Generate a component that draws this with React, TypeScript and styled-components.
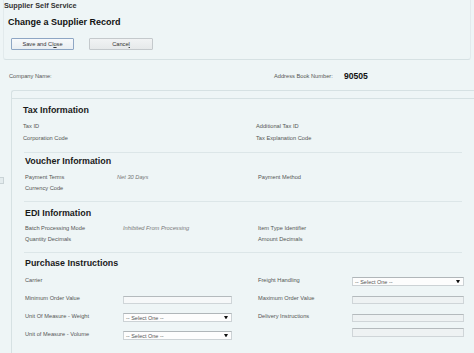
import React from "react";
import styled, { createGlobalStyle } from "styled-components";

const GlobalStyle = createGlobalStyle`
  html, body { margin: 0; padding: 0; background: #eef5f6; overflow: hidden; }
  body { font-family: "Liberation Sans", Arial, sans-serif; color: #444; }
  * { box-sizing: border-box; }
`;

const Page = styled.div`
  position: relative;
  width: 474px;
  height: 353px;
  overflow: hidden;
  background: #eef5f6;
`;

const Header = styled.header`
  margin: 0 3px;
  height: 60px;
  border-bottom: 1px solid #d6e1e3;
  border-left: 1px solid #e2eaec;
  border-right: 1px solid #e2eaec;
  border-radius: 0 0 3px 3px;
  display: flex;
  flex-direction: column;
`;

const AppTitle = styled.div`
  font-size: 7.3px;
  font-weight: bold;
  line-height: 11px;
  color: #333;
`;

const PageTitle = styled.h1`
  margin: 5px 0 0 4px;
  font-size: 9px;
  line-height: 12px;
  font-weight: bold;
  color: #111;
`;

const ButtonRow = styled.div`
  display: flex;
  gap: 15px;
  margin: 10px 0 0 7px;
`;

const Button = styled.button<{ $primary?: boolean }>`
  width: ${(p) => (p.$primary ? 63 : 64)}px;
  height: 12px;
  padding: 0;
  font-family: inherit;
  font-size: 5.7px;
  line-height: 10px;
  color: #333;
  border: 1px solid ${(p) => (p.$primary ? "#8ea6c4" : "#c4c9cc")};
  background: ${(p) => (p.$primary ? "linear-gradient(#f7f9fb, #e9eef2)" : "linear-gradient(#f1f3f4, #e6e9ea)")};
  border-radius: 1px;
  u { text-decoration-thickness: 0.6px; }
`;

const CompanyRow = styled.div`
  height: 30px;
  padding: 11px 0 0 9px;
  display: grid;
  grid-template-columns: 265px 70px auto;
  grid-template-rows: 10px;
  align-items: center;
  align-content: start;
  font-size: 5.7px;
  line-height: 10px;
`;

const Label = styled.span`
  font-size: 5.7px;
  color: #555;
  white-space: nowrap;
`;

const BigNumber = styled.span`
  font-size: 8.6px;
  font-weight: bold;
  color: #111;
`;

const Panel = styled.div`
  margin-left: 11px;
  margin-right: -20px;
  border-left: 1px solid #d6e1e3;
  border-top: 1px solid #d6e1e3;
  border-top-left-radius: 3px;
  height: 263px;
`;

const PanelStrip = styled.div`
  height: 8px;
  border-bottom: 1px solid #d6e1e3;
`;

const Section = styled.section<{ $pt: number; $gap: number; $pl?: number }>`
  padding: ${(p) => p.$pt}px 0 7px ${(p) => p.$pl ?? 13}px;
  h2 { margin: 0 0 ${(p) => p.$gap}px 0; }
`;

const Heading = styled.h2`
  font-size: 8.9px;
  line-height: 12px;
  font-weight: bold;
  color: #1a1a1a;
`;

const Grid = styled.div<{ $rh: number; $c1?: number }>`
  display: grid;
  grid-template-columns: ${(p) => p.$c1 ?? 98}px ${(p) => 233 - (p.$c1 ?? 98)}px 94px 112px;
  grid-auto-rows: ${(p) => p.$rh}px;
  align-items: stretch;
  font-size: 5.7px;
  line-height: 1;
`;

const Cell = styled.div`
  display: flex;
  align-items: center;
`;

const Value = styled.span`
  font-size: 5.7px;
  font-style: italic;
  color: #777;
  white-space: nowrap;
`;

const Divider = styled.hr`
  margin: 0 0 0 12px;
  width: 438px;
  height: 0;
  border: 0;
  border-top: 1px solid #dce6e8;
`;

const Field = styled.div<{ $w: number; $gray?: boolean; $up?: boolean }>`
  width: ${(p) => p.$w}px;
  height: 8.5px;
  margin-top: ${(p) => (p.$up ? -5 : 2)}px;
  border: 1px solid #cfd5d8;
  border-top-color: #b4babd;
  background: ${(p) => (p.$gray ? "#eef2f3" : "#f6f8f9")};
`;

const SelectBox = styled.div<{ $w: number }>`
  width: ${(p) => p.$w}px;
  height: 8.5px;
  margin-top: 1px;
  border: 1px solid #ccd2d5;
  border-top-color: #b0b6b9;
  background: #fdfdfd;
  display: flex;
  align-items: center;
  justify-content: space-between;
  padding: 0 3px 0 2px;
  font-size: 5.5px;
  color: #555;
  line-height: 6px;
`;

const Arrow = styled.svg`
  width: 4px;
  height: 3.5px;
  display: block;
`;

const Handle = styled.div`
  position: absolute;
  left: 0;
  top: 177px;
  width: 4px;
  height: 7px;
  border: 1px solid #c9d3d6;
  border-left: 0;
  background: #e4ecee;
`;

const Select = ({ w }: { w: number }) => (
  <SelectBox $w={w}>
    <span>-- Select One --</span>
    <Arrow viewBox="0 0 4 3.5">
      <path d="M0 0 L4 0 L2 3.5 Z" fill="#111" />
    </Arrow>
  </SelectBox>
);

type Row = [React.ReactNode, React.ReactNode, React.ReactNode, React.ReactNode];

const Rows = ({ rows, rh, c1 }: { rows: Row[]; rh: number; c1?: number }) => (
  <Grid $rh={rh} $c1={c1}>
    {rows.map((r, i) => (
      <React.Fragment key={i}>
        {r.map((c, j) => (
          <Cell key={j}>{typeof c === "string" ? <Label>{c}</Label> : c}</Cell>
        ))}
      </React.Fragment>
    ))}
  </Grid>
);

export default function App() {
  return (
    <Page>
      <GlobalStyle />
      <Header>
        <AppTitle>Supplier Self Service</AppTitle>
        <PageTitle>Change a Supplier Record</PageTitle>
        <ButtonRow>
          <Button $primary>
            Save and Cl<u>o</u>se
          </Button>
          <Button>
            Cance<u>l</u>
          </Button>
        </ButtonRow>
      </Header>
      <CompanyRow>
        <Label>Company Name:</Label>
        <Label>Address Book Number:</Label>
        <BigNumber>90505</BigNumber>
      </CompanyRow>
      <Panel>
        <PanelStrip />
        <Section $pt={5} $gap={5} $pl={11}>
          <Heading>Tax Information</Heading>
          <Rows
            rh={12}
            rows={[
              ["Tax ID", "", "Additional Tax ID", ""],
              ["Corporation Code", "", "Tax Explanation Code", ""],
            ]}
          />
        </Section>
        <Divider />
        <Section $pt={2} $gap={5}>
          <Heading>Voucher Information</Heading>
          <Rows
            rh={11}
            c1={92}
            rows={[
              ["Payment Terms", <Value>Net 30 Days</Value>, "Payment Method", ""],
              ["Currency Code", "", "", ""],
            ]}
          />
        </Section>
        <Divider />
        <Section $pt={5} $gap={4}>
          <Heading>EDI Information</Heading>
          <Rows
            rh={11}
            rows={[
              ["Batch Processing Mode", <Value>Inhibited From Processing</Value>, "Item Type Identifier", ""],
              ["Quantity Decimals", "", "Amount Decimals", ""],
            ]}
          />
        </Section>
        <Divider />
        <Section $pt={4} $gap={3}>
          <Heading>Purchase Instructions</Heading>
          <Rows
            rh={18}
            rows={[
              ["Carrier", "", "Freight Handling", <Select w={112} />],
              ["Minimum Order Value", <Field $w={109} />, "Maximum Order Value", <Field $w={112} $gray />],
              ["Unit Of Measure - Weight", <Select w={109} />, "Delivery Instructions", <Field $w={112} $gray />],
              ["Unit of Measure - Volume", <Select w={109} />, "", <Field $w={112} $gray $up />],
            ]}
          />
        </Section>
      </Panel>
      <Handle />
    </Page>
  );
}
